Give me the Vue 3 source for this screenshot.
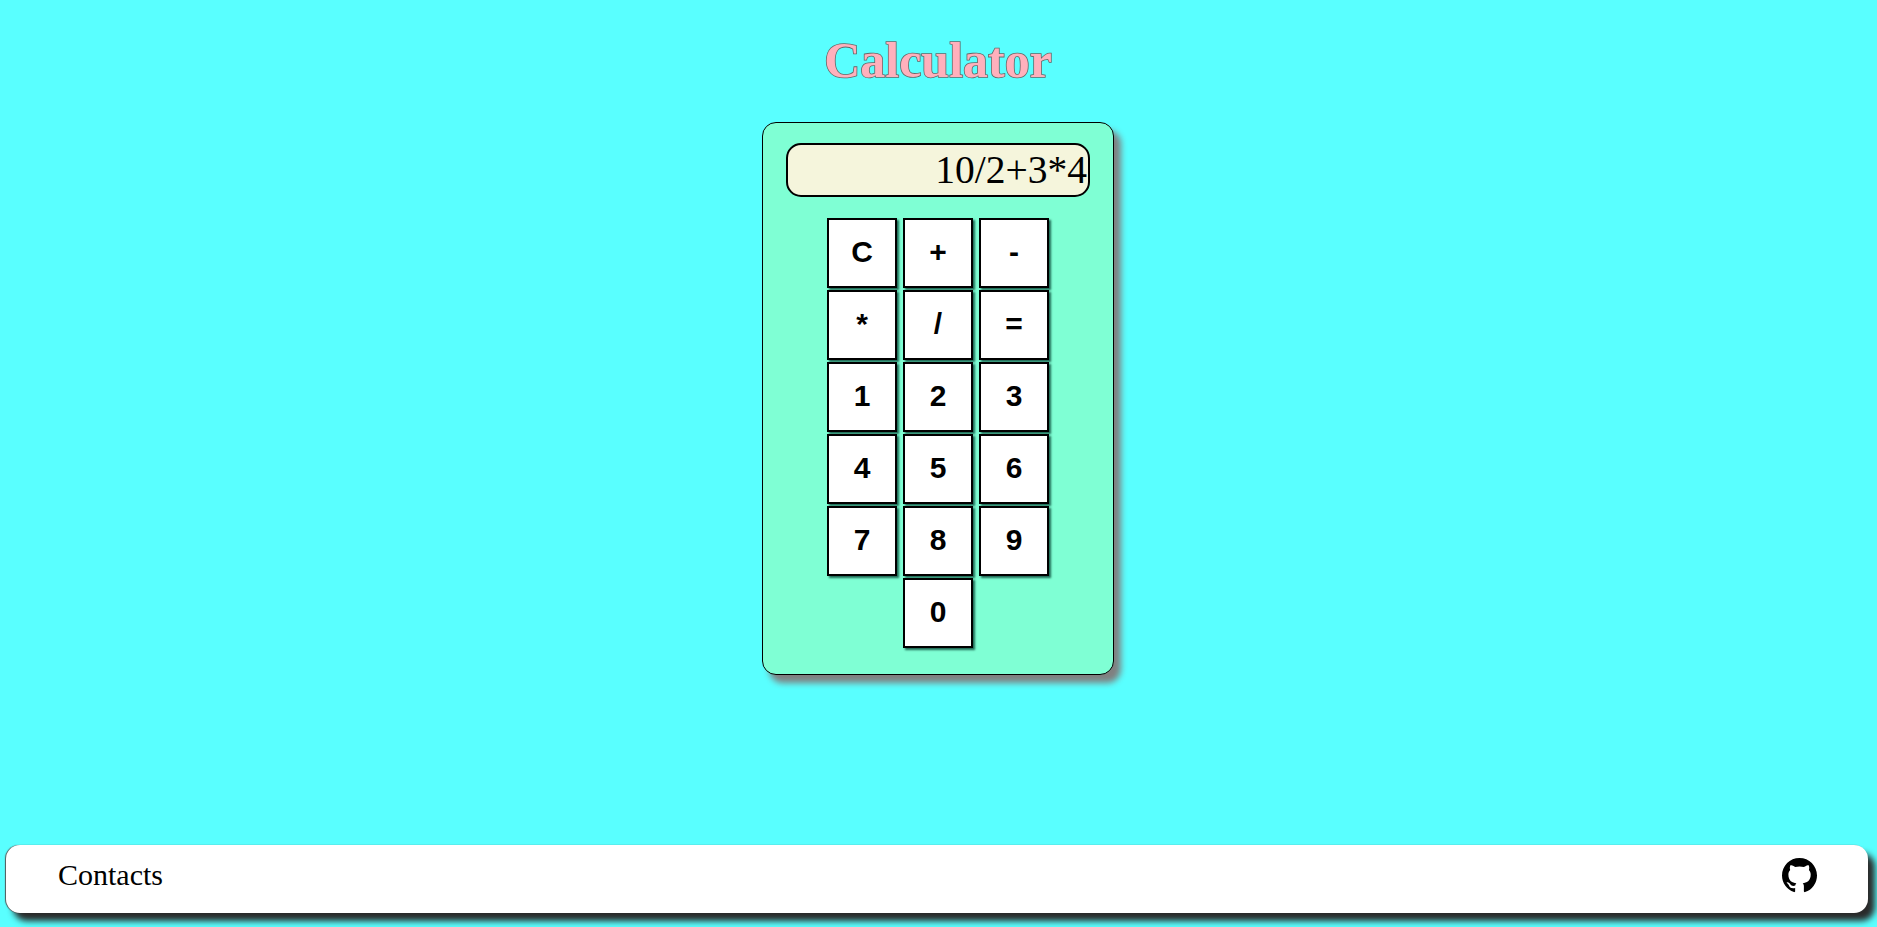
<script setup>
const keys = ['C', '+', '-', '*', '/', '=', '1', '2', '3', '4', '5', '6', '7', '8', '9', '0']
</script>

<template>
  <div class="page">
    <h1 class="title">Calculator</h1>
    <main class="calc">
      <div class="display">10/2+3*4</div>
      <div class="keys">
        <button v-for="k in keys" :key="k" class="key" :class="{ zero: k === '0' }">{{ k }}</button>
      </div>
    </main>
    <footer class="foot">
      <span class="contacts">Contacts</span>
      <svg class="gh" viewBox="0 0 16 16" aria-label="GitHub">
        <path fill="#000" fill-rule="evenodd" d="M8 0C3.58 0 0 3.58 0 8c0 3.54 2.29 6.53 5.47 7.59.4.07.55-.17.55-.38 0-.19-.01-.82-.01-1.49-2.01.37-2.53-.49-2.69-.94-.09-.23-.48-.94-.82-1.13-.28-.15-.68-.52-.01-.53.63-.01 1.08.58 1.23.82.72 1.21 1.87.87 2.33.66.07-.52.28-.87.51-1.07-1.78-.2-3.64-.89-3.64-3.95 0-.87.31-1.59.82-2.15-.08-.2-.36-1.02.08-2.12 0 0 .67-.21 2.2.82.64-.18 1.32-.27 2-.27.68 0 1.36.09 2 .27 1.53-1.04 2.2-.82 2.2-.82.44 1.1.16 1.92.08 2.12.51.56.82 1.27.82 2.15 0 3.07-1.87 3.75-3.65 3.95.29.25.54.73.54 1.48 0 1.07-.01 1.93-.01 2.2 0 .21.15.46.55.38A8.013 8.013 0 0016 8c0-4.42-3.58-8-8-8z"/>
      </svg>
    </footer>
  </div>
</template>

<style>
html, body { margin: 0; background: #59ffff; }
</style>

<style scoped>
.page {
  height: 927px;
  box-sizing: border-box;
  padding-right: 1px;
  display: flex;
  flex-direction: column;
  align-items: center;
  background: #59ffff;
  font-family: "Liberation Serif", serif;
  overflow: hidden;
}
.title {
  margin: 31px 0 0;
  height: 58px;
  font-size: 50px;
  line-height: 58px;
  font-weight: bold;
  color: #ffb0bc;
  -webkit-text-stroke: 1.6px #666;
  paint-order: stroke fill;
}
.calc {
  margin-top: 33px;
  width: 352px;
  height: 553px;
  box-sizing: border-box;
  border: 1px solid #000;
  border-radius: 14px;
  background: #7fffd4;
  box-shadow: 7px 8px 6px #808080;
  padding: 20px 23px;
  display: flex;
  flex-direction: column;
  align-items: center;
}
.display {
  width: 304px;
  height: 54px;
  box-sizing: border-box;
  border: 2px solid #000;
  border-radius: 15px;
  padding-right: 1px;
  background: #f5f5dc;
  font-size: 39.5px;
  line-height: 50px;
  text-align: right;
  white-space: nowrap;
}
.keys {
  margin-top: 21px;
  display: grid;
  grid-template-columns: repeat(3, 70px);
  grid-auto-rows: 70px;
  column-gap: 6px;
  row-gap: 2px;
}
.key {
  padding: 0 0 2px;
  box-sizing: border-box;
  border: 2.5px solid #000;
  background: #fff;
  color: #000;
  font-family: "Liberation Sans", sans-serif;
  font-size: 30px;
  font-weight: bold;
  box-shadow: 2px 2px 2px #1f6a55;
}
.zero { grid-column: 2; }
.foot {
  margin: auto 8px 14px 6px;
  align-self: stretch;
  height: 68px;
  box-sizing: border-box;
  padding: 0 51px 8px 52px;
  display: flex;
  align-items: center;
  justify-content: space-between;
  background: #fff;
  border-radius: 14px;
  box-shadow: 7px 8px 6px #2a2a2a, -1px 0 1px #555;
}
.contacts {
  font-size: 30px;
  color: #000;
}
.gh {
  width: 35px;
  height: 35px;
}
</style>
